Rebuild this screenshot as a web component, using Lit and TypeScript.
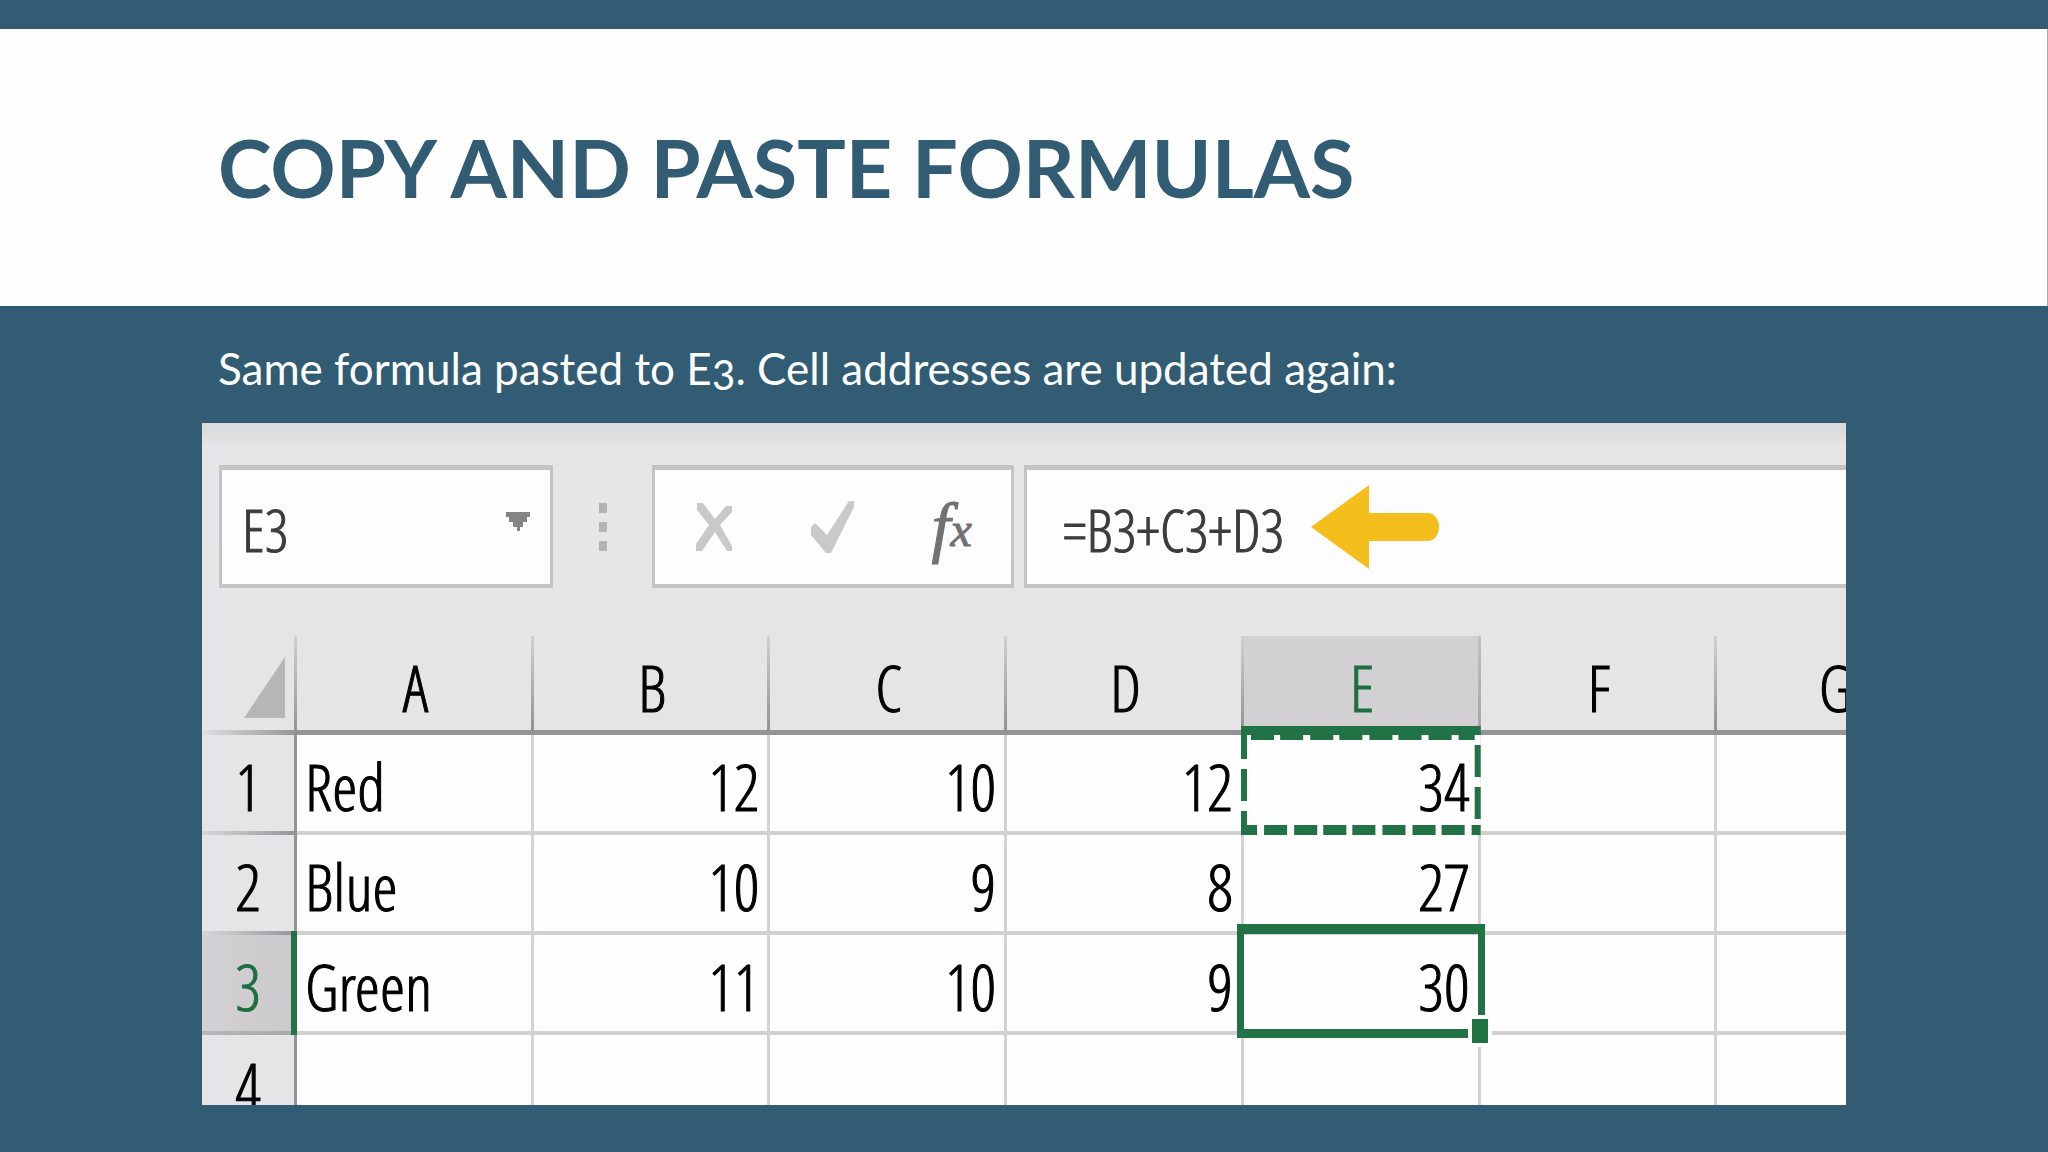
import { LitElement, html, css, svg, nothing } from "lit";
import { customElement, state } from "lit/decorators.js";
import { classMap } from "lit/directives/class-map.js";

const COLUMNS = ["A", "B", "C", "D", "E", "F", "G"];

const ROWS: string[][] = [
  ["Red", "12", "10", "12", "34", "", ""],
  ["Blue", "10", "9", "8", "27", "", ""],
  ["Green", "11", "10", "9", "30", "", ""],
  ["", "", "", "", "", "", ""],
];

@customElement("formula-toolbar")
class FormulaToolbar extends LitElement {
  static styles = css`
    :host {
      display: flex;
      align-items: stretch;
      height: 123px;
      padding: 42px 0 48px 17px;
      background: linear-gradient(#d9dadb 0, #dcddde 8px, #e6e6e8 26px, #e6e4e7 100%);
    }
    .box {
      box-sizing: border-box;
      display: flex;
      align-items: center;
      border: solid #c4c3c6;
      border-width: 5px 3px 4px;
      background: #fdfcfe;
    }
    .name-box { width: 334px; }
    .tools { width: 362px; }
    .formula {
      flex: 1;
      min-width: 0;
      margin-left: 10px;
      border-right-width: 0;
    }
    input {
      min-width: 0;
      height: 100%;
      box-sizing: border-box;
      border: 0;
      padding: 4px 0 0;
      outline: 0;
      background: transparent;
      color: #3c3b3d;
      font: 400 59px/72px "Open Sans Condensed Light", "Roboto Condensed", sans-serif;
      -webkit-text-stroke: 1px #3c3b3d;
    }
    .name-input { flex: 1; padding-left: 20px; }
    .formula-input { width: 284px; padding-left: 36px; }
    button {
      border: 0;
      padding: 0;
      background: none;
      display: flex;
      align-items: center;
      justify-content: center;
      height: 100%;
    }
    .open { width: 64px; }
    .tool { flex: 1; }
    svg { display: block; }
    .dots {
      width: 99px;
      display: flex;
      align-items: center;
      justify-content: center;
    }
    .fx {
      color: #727274;
      font: italic 400 68px/72px "Liberation Serif", serif;
      -webkit-text-stroke: 1px #727274;
    }
    .fx sub {
      font-size: 48px;
      line-height: 1;
      vertical-align: 4px;
    }
  `;

  render() {
    return html`
      <div class="box name-box">
        <input class="name-input" aria-label="Name Box" value="E3" />
        <button class="open" aria-label="Open name list">
          <svg width="24" height="38" viewBox="0 0 24 38">
            <path fill="#858587" d="M0 4h24v5h-3v5h-4v5h-3v4h-3v-4h-4v-5h-4v-5h-3z" />
          </svg>
        </button>
      </div>
      <div class="dots">
        <svg width="8" height="48" viewBox="0 0 8 48">
          <path fill="#b3b3b5" d="M0 0h8v10h-8zM0 19h8v10h-8zM0 38h8v10h-8z" />
        </svg>
      </div>
      <div class="box tools">
        <button class="tool" aria-label="Cancel">
          <svg width="38" height="50" viewBox="0 0 38 50">
            <path
              fill="#c9c9cb"
              d="M2 1h6l12 16L31 4h6v6L25 23l12 21v5h-5L20 30 7 49H1v-7l13-19L2 8z"
            />
          </svg>
        </button>
        <button class="tool" aria-label="Enter">
          <svg width="44" height="54" viewBox="0 0 44 54">
            <path fill="#c9c9cb" d="M0 27l4-4 12 12L38 1h5v6L20 53h-5L0 35z" />
          </svg>
        </button>
        <button class="tool fx" aria-label="Insert Function"><span>f<sub>x</sub></span></button>
      </div>
      <div class="box formula">
        <input class="formula-input" aria-label="Formula Bar" value="=B3+C3+D3" />
        <svg width="128" height="86" viewBox="0 0 128 86">
          <path fill="#f4bf1d" d="M0 43L58 1v28h59a11 14 0 0 1 0 28H58v28z" />
        </svg>
      </div>
    `;
  }
}

@customElement("sheet-grid")
class SheetGrid extends LitElement {
  @state() private activeColumn = 4;
  @state() private activeRow = 2;
  @state() private copiedRow = 0;

  static styles = css`
    :host { display: block; }
    table {
      width: calc(100% + 108px);
      table-layout: fixed;
      border-collapse: separate;
      border-spacing: 0;
      background: #fefefe;
      color: #000;
      font: 400 64px/72px "Open Sans Condensed Light", "Roboto Condensed", sans-serif;
      -webkit-text-stroke: 1px currentColor;
    }
    th, td {
      box-sizing: border-box;
      position: relative;
      font-weight: 400;
      white-space: nowrap;
    }
    thead th {
      height: 99px;
      padding: 9px 0 0;
      border-bottom: 5px solid #959396;
      background:
        linear-gradient(#d0cfd2, #939194) right / 3px 100% no-repeat,
        #e6e4e7;
    }
    thead th.active {
      color: #1d6f42;
      background:
        linear-gradient(#c0bfc1, #a5a4a6) right / 3px 100% no-repeat,
        #d2d0d3;
    }
    thead .corner {
      width: 95px;
      padding-bottom: 5px;
      border-bottom: 0;
      background:
        linear-gradient(#d0cfd2, #939194) right / 3px 100% no-repeat,
        linear-gradient(90deg, #e0dee1, #959396) bottom / 100% 5px no-repeat,
        #e6e4e7;
    }
    .corner svg { display: block; margin-left: 41px; }
    tbody th, td {
      height: 100px;
      padding: 8px 8px 0;
      border-right: 3px solid #d4d2d5;
      border-bottom: 4px solid #d2d0d3;
    }
    tbody th {
      padding: 8px 0 4px;
      border-right-color: #959396;
      border-bottom: 0;
      background:
        linear-gradient(90deg, #d8d6d9, #98969a) bottom / 100% 4px no-repeat,
        #e6e4e7;
    }
    tbody th.active {
      color: #1d6f42;
      background:
        linear-gradient(90deg, #b8b6b9, #a9a7aa) bottom / 100% 4px no-repeat,
        linear-gradient(90deg, #d3d1d4, #cbc9cc);
    }
    tbody th.active::after {
      content: "";
      position: absolute;
      top: -4px;
      bottom: 0;
      right: -3px;
      width: 6px;
      background: #217346;
    }
    td { text-align: left; }
    td.number { text-align: right; }
    .marquee {
      position: absolute;
      left: -3px;
      top: -9px;
      width: calc(100% + 6px);
      height: 109px;
      z-index: 1;
    }
    .selection {
      position: absolute;
      box-sizing: border-box;
      left: -7px;
      right: -7px;
      top: -11px;
      bottom: -7px;
      border: solid #217346;
      border-width: 10px 7px 9px;
      z-index: 1;
    }
    .handle {
      position: absolute;
      right: -10px;
      bottom: -14px;
      width: 16px;
      height: 24px;
      background: #217346;
      box-shadow: 0 0 0 4px #fefefe;
    }
  `;

  private marquee() {
    const bottom = [23, 53, 82, 111, 141, 171, 200];
    const top = [10, 39, 69, 98, 128, 157, 187];
    return html`<svg class="marquee" viewBox="0 0 239 109" preserveAspectRatio="none" aria-hidden="true">
      ${svg`
        <path fill="#fefefe" d="M0 9h6v100h-6zM233 9h6v100h-6zM0 99h239v10h-239z" />
        <path fill="#217346" d="M0 0h239v9h-239zM0 9h6v24h-6zM0 43h6v32h-6zM0 85h6v14h10v10h-16zM233 19h6v32h-6zM233 61h6v32h-6zM230 99h9v10h-9z" />
        ${bottom.map((x) => svg`<rect x=${x} y="99" width="23" height="10" fill="#217346" />`)}
        ${top.map((x) => svg`<rect x=${x} y="9" width="23" height="5" fill="#217346" />`)}
        <rect x="217" y="9" width="16" height="5" fill="#217346" />
      `}
    </svg>`;
  }

  private cell(value: string, row: number, column: number) {
    const inColumn = column === this.activeColumn;
    return html`<td class=${classMap({ number: /^\d+$/.test(value) })}>${value}${
      inColumn && row === this.copiedRow ? this.marquee() : nothing
    }${
      inColumn && row === this.activeRow
        ? html`<div class="selection"><div class="handle"></div></div>`
        : nothing
    }</td>`;
  }

  render() {
    return html`
      <table>
        <thead>
          <tr>
            <th class="corner" aria-label="Select all">
              <svg width="43" height="62" viewBox="0 0 43 62">
                <path fill="#b7b5b8" d="M42 0v61H1z" />
              </svg>
            </th>
            ${COLUMNS.map(
              (name, i) => html`<th scope="col" class=${classMap({ active: i === this.activeColumn })}>${name}</th>`,
            )}
          </tr>
        </thead>
        <tbody>
          ${ROWS.map(
            (row, r) => html`<tr>
              <th scope="row" class=${classMap({ active: r === this.activeRow })}>${r + 1}</th>
              ${row.map((value, c) => this.cell(value, r, c))}
            </tr>`,
          )}
        </tbody>
      </table>
    `;
  }
}

@customElement("app-root")
class AppRoot extends LitElement {
  static styles = css`
    :host {
      display: flex;
      flex-direction: column;
      box-sizing: border-box;
      height: 100vh;
      padding: 29px 0 47px;
      background: #315c74;
      font-family: Lato, Carlito, sans-serif;
    }
    header {
      box-sizing: border-box;
      flex: none;
      height: 277px;
      padding: 86px 218px 0;
      background: #fefefe;
      border-right: 1px solid #a9abad;
    }
    h1 {
      margin: 0;
      color: #315c74;
      font-size: 81px;
      font-weight: 700;
      line-height: 104px;
      text-transform: uppercase;
    }
    p {
      flex: none;
      margin: 0;
      padding: 32px 218px 25px;
      color: #fcfeff;
      font: 44px/60px Lato, Carlito, sans-serif;
      font-variant-numeric: oldstyle-nums;
    }
    .sheet {
      flex: 1;
      min-height: 0;
      margin: 0 202px;
      overflow: hidden;
      background: #fefefe;
    }
  `;

  render() {
    return html`
      <header><h1>Copy and Paste Formulas</h1></header>
      <p>Same formula pasted to E3. Cell addresses are updated again:</p>
      <section class="sheet">
        <formula-toolbar></formula-toolbar>
        <sheet-grid></sheet-grid>
      </section>
    `;
  }
}
